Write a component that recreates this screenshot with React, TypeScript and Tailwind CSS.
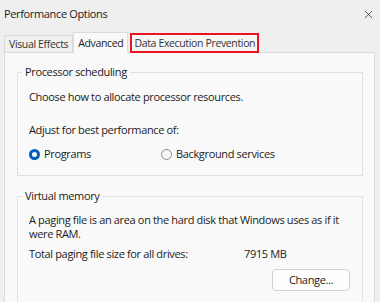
import {X} from "lucide-react";

function Radio({checked, label}: {checked: boolean, label: string}) {
    return (
        <label className="flex items-center gap-[4px]">
            {checked
                ? <span className="flex items-center justify-center w-[11px] h-[11px] rounded-full bg-[#005fb8]">
                    <span className="w-[5px] h-[5px] rounded-full bg-white"/>
                  </span>
                : <span className="w-[11px] h-[11px] rounded-full border border-[#8a8a8a] bg-[#f6f6f6]"/>}
            <span>{label}</span>
        </label>
    )
}

function App() {
    return (
        <div className="w-[380px] h-[302px] overflow-hidden bg-[#efefef] text-[11px] leading-[16px] tracking-[-0.35px] text-[#1b1b1b] font-['Open_Sans',sans-serif]">
            <div className="flex items-center justify-between h-[28px] pl-[4px] pr-[5px]">
                <span>Performance Options</span>
                <X size={13} strokeWidth={1.3} className="text-[#222]"/>
            </div>

            {/* tabs */}
            <div className="flex items-end h-[24px] pl-[4px] text-[10.5px]">
                <div className="h-[17px] px-[4px] flex items-center border border-b-0 border-[#dadada] bg-[#f0f0f0] text-[#333]">
                    Visual Effects
                </div>
                <div className="relative z-10 -mb-px h-[21px] px-[4px] pt-[2px] border border-b-0 border-[#dcdcdc] bg-[#f9f9f9]">
                    Advanced
                </div>
                <div className="relative z-10 ml-[2px] -mb-px h-[20px] px-[2px] flex items-center border-2 border-[#e8141f] bg-[#f6f6f6] text-[#333]">
                    Data Execution Prevention
                </div>
            </div>

            <div className="ml-[4px] w-[371px] h-[260px] border border-[#dcdcdc] bg-[#f9f9f9] pt-[11px] pl-[12px] pr-[11px]">
                <fieldset className="min-w-0 border border-[#e1e1e1] pl-[11px] pr-[12px] pb-[13px]">
                    <legend className="-ml-[7px] px-[3px]">Processor scheduling</legend>
                    <p className="mt-[9px]">Choose how to allocate processor resources.</p>
                    <p className="mt-[17px]">Adjust for best performance of:</p>
                    <div className="flex mt-[8px]">
                        <div className="w-[132px]"><Radio checked label="Programs"/></div>
                        <Radio checked={false} label="Background services"/>
                    </div>
                </fieldset>

                <fieldset className="min-w-0 mt-[12px] border border-[#e1e1e1] pl-[11px] pr-[12px] pb-[14px]">
                    <legend className="-ml-[7px] px-[3px]">Virtual memory</legend>
                    <p className="mt-[9px] leading-[14px] whitespace-nowrap">
                        A paging file is an area on the hard disk that Windows uses as if it<br/>were RAM.
                    </p>
                    <div className="flex mt-[6px] leading-[14px]">
                        <span className="w-[215px] shrink-0">Total paging file size for all drives:</span>
                        <span>7915 MB</span>
                    </div>
                    <div className="flex justify-end mt-[8px]">
                        <button className="w-[78px] h-[22px] rounded-[4px] border border-[#d3d3d3] bg-[#fdfdfd] text-[11px]">
                            Change...
                        </button>
                    </div>
                </fieldset>
            </div>
        </div>
    )
}

export default App;
